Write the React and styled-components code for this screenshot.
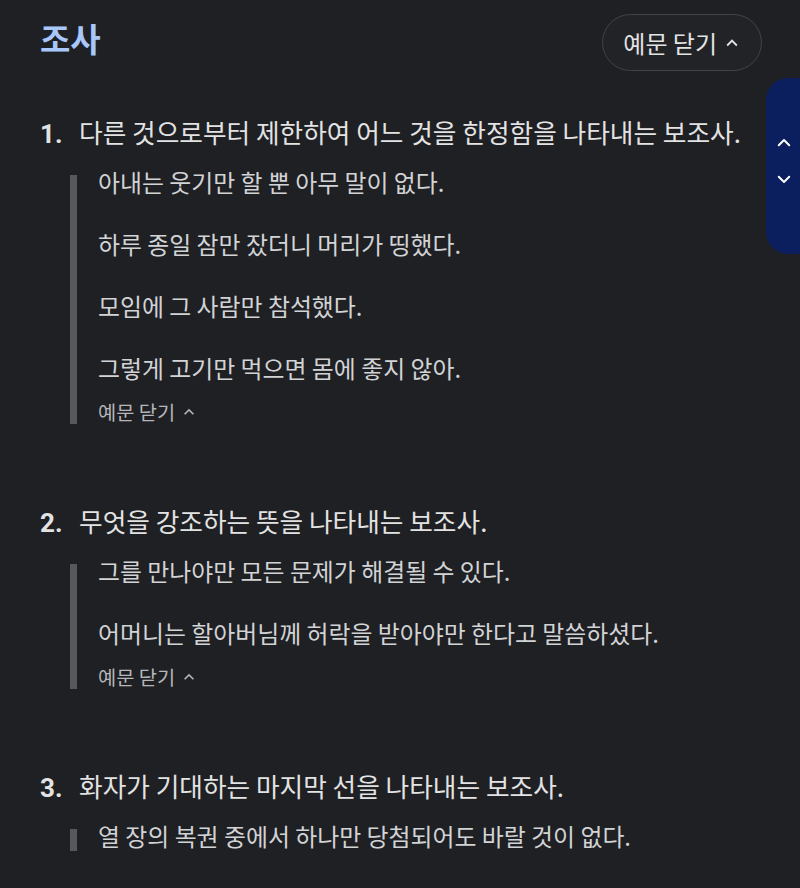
import React from 'react';
import styled, { createGlobalStyle } from 'styled-components';

const GlobalStyle = createGlobalStyle`
  html, body {
    margin: 0;
    padding: 0;
    background: #1f2024;
  }
  body {
    font-family: "Noto Sans CJK KR", "Noto Sans", sans-serif;
    -webkit-font-smoothing: antialiased;
  }
`;

const Page = styled.div`
  position: relative;
  height: 888px;
  overflow: hidden;
  padding: 14px 38px 0 40px;
  box-sizing: border-box;
  background: #1f2024;
`;

const Header = styled.div`
  display: flex;
  justify-content: space-between;
  align-items: flex-start;
`;

const Title = styled.h2`
  margin: 4px 0 0;
  font-size: 33px;
  line-height: 40px;
  font-weight: 700;
  color: #a8c7fa;
`;

const ToggleButton = styled.button`
  display: flex;
  align-items: center;
  gap: 4px;
  height: 57px;
  padding: 0 18px 0 20px;
  border: 1px solid #414346;
  border-radius: 29px;
  background: #222327;
  color: #e3e3e3;
  font-family: inherit;
  font-size: 24px;
  cursor: pointer;
`;

const List = styled.ol`
  list-style: none;
  margin: 45px 0 0;
  padding: 0;
`;

const Item = styled.li`
  margin-bottom: 81px;
`;

const Heading = styled.div`
  display: flex;
  align-items: baseline;
  height: 32px;
  font-size: 25.7px;
  line-height: 32px;
  color: #e3e3e3;
`;

const Num = styled.span`
  width: 39px;
  flex: none;
  font-family: Roboto, "Noto Sans", sans-serif;
  font-size: 26px;
  line-height: 24px;
  font-weight: 700;
`;

const Quote = styled.div`
  display: flex;
  margin: 19px 0 0 30px;
`;

const Bar = styled.div`
  width: 7px;
  flex: none;
  margin-top: 8px;
  background: #56585c;
`;

const Content = styled.div`
  padding-left: 21px;
`;

const Examples = styled.div`
  display: flex;
  flex-direction: column;
  gap: 32px;
`;

const Example = styled.p`
  margin: 0;
  font-size: 23.9px;
  line-height: 30px;
  color: #d2d3d5;
`;

const CloseLink = styled.div`
  display: flex;
  align-items: center;
  gap: 4px;
  margin-top: 17px;
  font-size: 19.8px;
  line-height: 24px;
  color: #b4b6b9;
`;

const Scroller = styled.div`
  position: absolute;
  top: 78px;
  right: -20px;
  width: 54px;
  height: 176px;
  border-radius: 22px;
  background: #0b1f5e;
  display: flex;
  flex-direction: column;
  align-items: flex-start;
  justify-content: center;
  gap: 18px;
  padding: 0 0 10px 9px;
  box-sizing: border-box;
`;

const ExpandLess = ({ size }) => (
  <svg width={size} height={size} viewBox="0 0 24 24" fill="currentColor">
    <path d="M7.41 15.41 12 10.83l4.59 4.58L18 14l-6-6-6 6z" />
  </svg>
);

const Chevron = ({ down }) => (
  <svg width="18" height="18" viewBox="0 0 24 24" fill="none" stroke="#ffffff" strokeWidth="2.6" strokeLinecap="round" strokeLinejoin="round">
    <path d={down ? 'M5 9l7 7 7-7' : 'M5 15l7-7 7 7'} />
  </svg>
);

const items = [
  {
    text: '다른 것으로부터 제한하여 어느 것을 한정함을 나타내는 보조사.',
    examples: [
      '아내는 웃기만 할 뿐 아무 말이 없다.',
      '하루 종일 잠만 잤더니 머리가 띵했다.',
      '모임에 그 사람만 참석했다.',
      '그렇게 고기만 먹으면 몸에 좋지 않아.',
    ],
    closable: true,
  },
  {
    text: '무엇을 강조하는 뜻을 나타내는 보조사.',
    examples: [
      '그를 만나야만 모든 문제가 해결될 수 있다.',
      '어머니는 할아버님께 허락을 받아야만 한다고 말씀하셨다.',
    ],
    closable: true,
  },
  {
    text: '화자가 기대하는 마지막 선을 나타내는 보조사.',
    examples: ['열 장의 복권 중에서 하나만 당첨되어도 바랄 것이 없다.'],
    closable: false,
  },
];

export default function App() {
  return (
    <>
      <GlobalStyle />
      <Page>
        <Header>
          <Title>조사</Title>
          <ToggleButton>
            예문 닫기
            <ExpandLess size={22} />
          </ToggleButton>
        </Header>
        <List>
          {items.map((item, i) => (
            <Item key={i}>
              <Heading>
                <Num>{i + 1}.</Num>
                <span>{item.text}</span>
              </Heading>
              <Quote>
                <Bar />
                <Content>
                  <Examples>
                    {item.examples.map((ex, j) => (
                      <Example key={j}>{ex}</Example>
                    ))}
                  </Examples>
                  {item.closable && (
                    <CloseLink>
                      예문 닫기
                      <ExpandLess size={20} />
                    </CloseLink>
                  )}
                </Content>
              </Quote>
            </Item>
          ))}
        </List>
        <Scroller>
          <Chevron />
          <Chevron down />
        </Scroller>
      </Page>
    </>
  );
}
